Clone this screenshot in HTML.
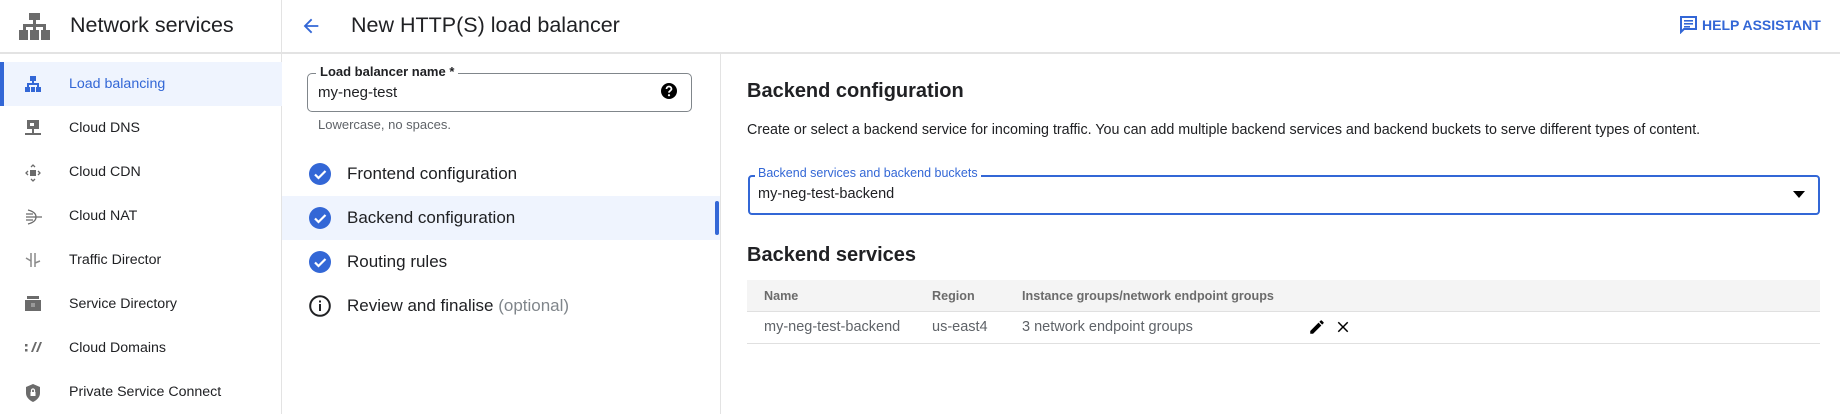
<!DOCTYPE html>
<html><head><meta charset="utf-8"><style>
*{box-sizing:border-box;margin:0;padding:0}
body{width:1840px;height:414px;overflow:hidden;background:#fff;font-family:"Liberation Sans",sans-serif;color:#202124;position:relative}
.a{position:absolute;white-space:nowrap}
.nav{position:absolute;left:0;width:282px;height:44px;}
.nav .t{position:absolute;left:69px;top:50%;transform:translateY(-50%);font-size:14.2px;color:#202124}
.nav svg{position:absolute;left:25px;top:14px}
.step{position:absolute;left:282px;width:438px;height:44px}
.step .t{position:absolute;left:65px;top:50%;transform:translateY(-50%);font-size:17px}
.step svg{position:absolute;left:27px;top:11px}
</style></head><body>
<div class="a" style="left:0;top:52px;width:1840px;height:2px;background:#e3e3e3"></div>
<div class="a" style="left:281px;top:0;width:1px;height:414px;background:#e3e3e3"></div>
<div class="a" style="left:720px;top:53px;width:1px;height:361px;background:#e3e3e3"></div>
<svg class="a" style="left:19px;top:13px" width="31" height="27" viewBox="0 0 31 27"><g fill="#6b6b6b"><rect x="10" y="0" width="11" height="7"/><rect x="14" y="7" width="3" height="5"/><rect x="4" y="11" width="23" height="3"/><rect x="4" y="11" width="3" height="6"/><rect x="24" y="11" width="3" height="6"/><rect x="14" y="11" width="3" height="6"/><rect x="0" y="17" width="9" height="10"/><rect x="11" y="17" width="9" height="10"/><rect x="22" y="17" width="9" height="10"/></g></svg>
<div class="a" style="left:70px;top:13px;font-size:21.5px">Network services</div>
<svg class="a" style="left:300px;top:15px" width="22" height="22" viewBox="0 0 24 24"><path d="M20 11H7.8l5.6-5.6L12 4l-8 8 8 8 1.4-1.4L7.8 13H20z" fill="#3367d6"/></svg>
<div class="a" style="left:351px;top:13px;font-size:21.5px">New HTTP(S) load balancer</div>
<svg class="a" style="left:1680px;top:16px" width="17" height="18" viewBox="0 0 17 18"><path d="M1 1h15v12H4l-3 3z" fill="none" stroke="#3367d6" stroke-width="2"/><rect x="4" y="4" width="9" height="1.6" fill="#3367d6"/><rect x="4" y="7" width="9" height="1.6" fill="#3367d6"/><rect x="4" y="10" width="6" height="1.6" fill="#3367d6"/></svg>
<div class="a" style="left:1702px;top:17px;font-size:14px;font-weight:bold;color:#3367d6">HELP ASSISTANT</div>

<div class="nav" style="top:62px;background:#eff4fe"><div style="position:absolute;left:0;top:0;width:4px;height:44px;background:#3367d6"></div>
<svg width="16" height="16" viewBox="0 0 16 16"><g fill="#3367d6"><rect x="5" y="0" width="6" height="5"/><rect x="7" y="5" width="2" height="3"/><rect x="2" y="7" width="12" height="2"/><rect x="2" y="7" width="2" height="4"/><rect x="12" y="7" width="2" height="4"/><rect x="0" y="11" width="5" height="5"/><rect x="11" y="11" width="5" height="5"/><rect x="6" y="11" width="4" height="5"/></g></svg>
<div class="t" style="color:#3367d6">Load balancing</div></div>
<div class="nav" style="top:106px"><svg width="16" height="16" viewBox="0 0 16 16"><g fill="#6b6b6b"><rect x="2" y="0" width="12" height="9"/><rect x="7" y="9" width="2" height="4"/><rect x="0" y="13" width="16" height="2"/></g><rect x="5" y="3" width="4" height="3" fill="#fff"/></svg><div class="t">Cloud DNS</div></div>
<div class="nav" style="top:150px"><svg width="16" height="18" viewBox="0 0 16 18"><g fill="none" stroke="#6b6b6b" stroke-width="1.3"><path d="M6 3l2-2 2 2M6 15l2 2 2-2M3 7l-2 2 2 2M13 7l2 2-2 2"/></g><rect x="5" y="6" width="6" height="6" fill="#6b6b6b"/></svg><div class="t">Cloud CDN</div></div>
<div class="nav" style="top:194px"><svg width="18" height="18" viewBox="0 0 18 18"><g fill="none" stroke="#6b6b6b" stroke-width="1.3"><path d="M3 2q8 2 8 7t-8 7M1 6h7M1 9h16M1 12h7"/></g></svg><div class="t">Cloud NAT</div></div>
<div class="nav" style="top:238px"><svg width="16" height="16" viewBox="0 0 16 16"><g fill="none" stroke="#8a8a8a" stroke-width="1.5"><path d="M6 1v14M10 1v14M1 6l5 3M15 9l-5 2"/></g></svg><div class="t">Traffic Director</div></div>
<div class="nav" style="top:282px"><svg width="16" height="16" viewBox="0 0 16 16"><g fill="#6b6b6b"><rect x="2" y="0" width="12" height="3"/><rect x="0" y="4" width="16" height="11"/></g><rect x="6" y="7" width="4" height="4" fill="#999"/></svg><div class="t">Service Directory</div></div>
<div class="nav" style="top:326px"><svg width="18" height="14" viewBox="0 0 18 14"><g fill="#6b6b6b"><rect x="0" y="4" width="2.5" height="2.5"/><rect x="0" y="9" width="2.5" height="2.5"/><path d="M6 12l4-10h2L8 12zM11 12l4-10h2l-4 10z"/></g></svg><div class="t">Cloud Domains</div></div>
<div class="nav" style="top:370px"><svg width="16" height="18" viewBox="0 0 16 18"><path d="M8 0l7 3v6c0 4-3 7-7 9-4-2-7-5-7-9V3z" fill="#6b6b6b"/><rect x="5.5" y="8" width="5" height="4" fill="#fff"/><path d="M6.5 8V6.5a1.5 1.5 0 013 0V8" fill="none" stroke="#fff" stroke-width="1.2"/></svg><div class="t">Private Service Connect</div></div>

<div class="a" style="left:307px;top:73px;width:385px;height:39px;border:1px solid #80868b;border-radius:5px"></div>
<div class="a" style="left:316px;top:64px;padding:0 4px;background:#fff;font-size:13px;font-weight:bold;color:#202124">Load balancer name *</div>
<div class="a" style="left:318px;top:84px;font-size:15px">my-neg-test</div>
<svg class="a" style="left:661px;top:83px" width="16" height="16" viewBox="0 0 16 16"><circle cx="8" cy="8" r="8" fill="#000"/><path d="M5.5 6a2.5 2.5 0 015 0c0 1.6-2.5 1.8-2.5 3.6" fill="none" stroke="#fff" stroke-width="1.8"/><circle cx="8" cy="12.2" r="1.1" fill="#fff"/></svg>
<div class="a" style="left:318px;top:117px;font-size:13px;color:#5f6368">Lowercase, no spaces.</div>

<div class="step" style="top:152px"><svg width="22" height="22" viewBox="0 0 22 22"><circle cx="11" cy="11" r="11" fill="#3367d6"/><path d="M6 11.5l3.5 3.5 7-7" fill="none" stroke="#fff" stroke-width="2.2"/></svg><div class="t">Frontend configuration</div></div>
<div class="step" style="top:196px;background:#eff4fe"><svg width="22" height="22" viewBox="0 0 22 22"><circle cx="11" cy="11" r="11" fill="#3367d6"/><path d="M6 11.5l3.5 3.5 7-7" fill="none" stroke="#fff" stroke-width="2.2"/></svg><div class="t">Backend configuration</div><div style="position:absolute;left:433px;top:5px;width:4px;height:34px;background:#3367d6;border-radius:2px"></div></div>
<div class="step" style="top:240px"><svg width="22" height="22" viewBox="0 0 22 22"><circle cx="11" cy="11" r="11" fill="#3367d6"/><path d="M6 11.5l3.5 3.5 7-7" fill="none" stroke="#fff" stroke-width="2.2"/></svg><div class="t">Routing rules</div></div>
<div class="step" style="top:284px"><svg width="22" height="22" viewBox="0 0 22 22"><circle cx="11" cy="11" r="9.8" fill="none" stroke="#202124" stroke-width="2"/><rect x="10" y="9" width="2" height="7" fill="#202124"/><rect x="10" y="5.5" width="2" height="2" fill="#202124"/></svg><div class="t">Review and finalise <span style="color:#80868b">(optional)</span></div></div>

<div class="a" style="left:747px;top:80px;font-size:20px;font-weight:bold">Backend configuration</div>
<div class="a" style="left:747px;top:122px;font-size:14.3px">Create or select a backend service for incoming traffic. You can add multiple backend services and backend buckets to serve different types of content.</div>
<div class="a" style="left:748px;top:175px;width:1072px;height:40px;border:2px solid #3367d6;border-radius:4px"></div>
<div class="a" style="left:755px;top:166px;padding:0 3px;background:#fff;font-size:12.5px;color:#3367d6">Backend services and backend buckets</div>
<div class="a" style="left:758px;top:186px;font-size:14.5px">my-neg-test-backend</div>
<svg class="a" style="left:1793px;top:191px" width="12" height="7" viewBox="0 0 12 7"><path d="M0 0h12L6 7z" fill="#000"/></svg>
<div class="a" style="left:747px;top:244px;font-size:20px;font-weight:bold">Backend services</div>
<div class="a" style="left:747px;top:280px;width:1073px;height:32px;background:#f4f4f4;border-bottom:1px solid #e0e0e0"></div>
<div class="a" style="left:764px;top:289px;font-size:12.6px;font-weight:bold;color:#6b6b6b">Name</div>
<div class="a" style="left:932px;top:289px;font-size:12.6px;font-weight:bold;color:#6b6b6b">Region</div>
<div class="a" style="left:1022px;top:289px;font-size:12.6px;font-weight:bold;color:#6b6b6b">Instance groups/network endpoint groups</div>
<div class="a" style="left:747px;top:343px;width:1073px;height:1px;background:#e0e0e0"></div>
<div class="a" style="left:764px;top:319px;font-size:14.5px;color:#5f6368">my-neg-test-backend</div>
<div class="a" style="left:932px;top:319px;font-size:14.5px;color:#5f6368">us-east4</div>
<div class="a" style="left:1022px;top:319px;font-size:14.5px;color:#5f6368">3 network endpoint groups</div>
<svg class="a" style="left:1308px;top:318px" width="18" height="18" viewBox="0 0 24 24"><path d="M3 17.25V21h3.75L17.8 9.94l-3.75-3.75zM20.7 7.04a1 1 0 000-1.41l-2.34-2.34a1 1 0 00-1.41 0l-1.83 1.83 3.75 3.75z" fill="#000"/></svg>
<svg class="a" style="left:1334px;top:318px" width="18" height="18" viewBox="0 0 24 24"><path d="M19 6.4L17.6 5 12 10.6 6.4 5 5 6.4 10.6 12 5 17.6 6.4 19 12 13.4 17.6 19 19 17.6 13.4 12z" fill="#000"/></svg>
</body></html>
